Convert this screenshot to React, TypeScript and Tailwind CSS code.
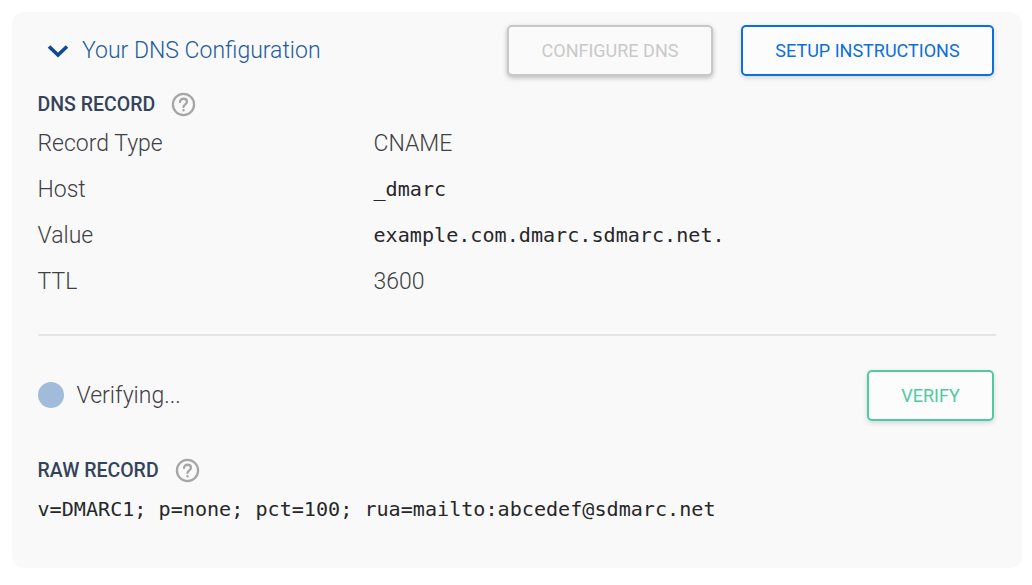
const HelpIcon = () => (
  <svg width="25" height="25" viewBox="0 0 26 26" fill="none" stroke="#a6a6a6" strokeWidth="2.4" strokeLinecap="round">
    <circle cx="13" cy="13" r="11" />
    <path d="M9.4 10.4c0-2.1 1.6-3.4 3.6-3.4s3.6 1.3 3.6 3.1c0 2.6-3.6 2.8-3.6 5.6" fill="none" />
    <circle cx="13" cy="19" r="0.6" fill="#a6a6a6" strokeWidth="1.4" />
  </svg>
);

const Row = ({ label, value, mono }: { label: string; value: string; mono?: boolean }) => (
  <div className="flex h-[46px] items-center">
    <div className="w-[336px] pt-[2px] text-[23px] font-light text-[#3f3f46]">{label}</div>
    <div
      className={
        mono
          ? "text-[20.12px] text-[#27272a] font-['DejaVu_Sans_Mono',monospace]"
          : "pt-[2px] text-[23px] font-light text-[#3f3f46]"
      }
    >
      {value}
    </div>
  </div>
);

export default function App() {
  return (
    <div className="h-[585px] w-[1032px] overflow-hidden bg-white p-3 font-['Roboto',sans-serif]">
      <div className="flex h-[556px] w-[1010px] flex-col rounded-xl bg-[#f9f9f9] pl-[25.5px] pr-[26px] pt-[13px]">
        <div className="flex h-[51px] items-center pr-[2px]">
          <svg width="22" height="14" viewBox="0 0 22 14" className="ml-[9px]" fill="none" stroke="#0d4a8f" strokeWidth="3.6">
            <path d="M2 2.5l9 8.5 9-8.5" />
          </svg>
          <h2 className="ml-[13.5px] pt-[1px] text-[23px] font-light text-[#1f5c9e]">Your DNS Configuration</h2>
          <button className="ml-auto h-[51px] w-[206px] rounded-[5px] border-2 border-[#c8c8c8] bg-[#fafafa] text-[18px] text-[#c9c9c9] shadow-[0_2px_5px_rgba(0,0,0,0.25)]">
            CONFIGURE DNS
          </button>
          <button className="ml-[28px] h-[51px] w-[253px] rounded-[5px] border-2 border-[#0b6fdc] bg-[#fcfcfc] text-[18px] text-[#0b6fdc] shadow-[0_2px_5px_rgba(0,0,0,0.15)]">
            SETUP INSTRUCTIONS
          </button>
        </div>

        <div className="mt-[15px] flex h-[26px] items-center gap-[16px]">
          <span className="pt-[2px] text-[19.5px] font-medium text-[#34435a]">DNS RECORD</span>
          <HelpIcon />
        </div>

        <div className="mt-[3px]">
          <Row label="Record Type" value="CNAME" />
          <Row label="Host" value="_dmarc" mono />
          <Row label="Value" value="example.com.dmarc.sdmarc.net." mono />
          <Row label="TTL" value="3600" />
        </div>

        <div className="mt-[30px] h-[2px] bg-[#e4e4e4]" />

        <div className="mt-[33px] flex h-[52px] items-center pr-[2px]">
          <div className="h-[26px] w-[26px] rounded-full bg-[#a1bbdb]" />
          <span className="ml-[13px] pt-[2px] text-[23px] font-light text-[#3f3f46]">Verifying...</span>
          <button className="ml-auto h-[51px] w-[127px] rounded-[5px] border-2 border-[#4fcb9f] bg-[#fcfcfc] text-[18px] text-[#4fcb9f] shadow-[0_2px_5px_rgba(0,0,0,0.15)]">
            VERIFY
          </button>
        </div>

        <div className="mt-[36px] flex h-[26px] items-center gap-[16px]">
          <span className="pt-[2px] text-[19.5px] font-medium text-[#34435a]">RAW RECORD</span>
          <HelpIcon />
        </div>

        <div className="mt-[11px] text-[20.12px] text-[#27272a] font-['DejaVu_Sans_Mono',monospace]">
          v=DMARC1; p=none; pct=100; rua=mailto:abcedef@sdmarc.net
        </div>
      </div>
    </div>
  );
}
